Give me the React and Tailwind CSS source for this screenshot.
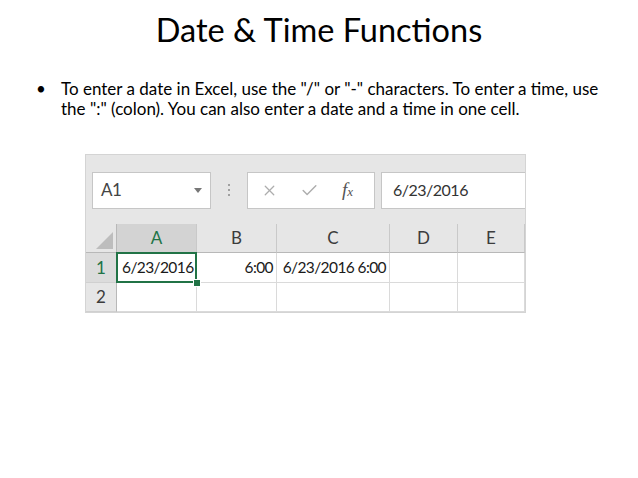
import { X, Check } from 'lucide-react';

const font = { fontFamily: 'Lato, "Open Sans", sans-serif' };

function HeaderCell({ label, active }) {
  return (
    <div
      className={`flex items-center justify-center border-r border-[#c9c9c9] border-b border-b-[#b8b8b8] text-[17px] ${
        active ? 'bg-[#d3d3d3] text-[#217346]' : 'bg-[#e6e6e6] text-[#3c3c3c]'
      }`}
    >
      {label}
    </div>
  );
}

function RowHead({ label, active }) {
  return (
    <div
      className={`flex items-center justify-center border-r border-[#b8b8b8] border-b border-b-[#d0d0d0] text-[17px] ${
        active ? 'bg-[#dcdcdc] text-[#217346]' : 'bg-[#e6e6e6] text-[#3c3c3c]'
      }`}
    >
      {label}
    </div>
  );
}

function Cell({ children, right, selected }) {
  return (
    <div
      className={`relative flex items-center border-r border-b border-[#dadada] bg-white text-[15.5px] tracking-[-0.6px] text-[#1a1a1a] whitespace-nowrap ${
        right ? 'justify-end pr-[3px]' : 'pl-[5px]'
      } ${selected ? 'z-10' : ''}`}
    >
      {children}
      {selected && (
        <>
          <div className="absolute -left-px -top-px right-[-1px] bottom-[-1px] border-2 border-[#217346]" />
          <div className="absolute right-[-5px] bottom-[-5px] w-[8px] h-[8px] bg-[#217346] border border-white" />
        </>
      )}
    </div>
  );
}

function Sheet() {
  return (
    <div className="ml-[85px] mt-[35px] w-[441px] h-[159px] bg-[#e6e6e6] border border-[#d4d4d4] flex flex-col" style={font}>
      <div className="flex items-center pt-[16px] pl-[6px] h-[54px]">
        <div className="w-[119px] h-[37px] bg-white border border-[#c6c6c6] flex items-center justify-between pl-[8px] pr-[8px] text-[17px] tracking-[-0.4px] text-[#444]">
          <span>A1</span>
          <span className="w-0 h-0 border-l-[4px] border-r-[4px] border-t-[5px] border-l-transparent border-r-transparent border-t-[#777]" />
        </div>
        <div className="w-[36px] flex flex-col items-center gap-[3px]">
          <span className="w-[2px] h-[2px] bg-[#a0a0a0]" />
          <span className="w-[2px] h-[2px] bg-[#a0a0a0]" />
          <span className="w-[2px] h-[2px] bg-[#a0a0a0]" />
        </div>
        <div className="w-[128px] h-[37px] bg-white border border-[#c6c6c6] flex items-center pl-[13px] text-[#adadad]">
          <X size={17} strokeWidth={1.8} />
          <Check size={19} strokeWidth={1.8} className="ml-[22px]" />
          <span className="ml-[23px] text-[19px] text-[#555] italic" style={{ fontFamily: '"Liberation Serif", serif' }}>
            f<span className="text-[13px]">x</span>
          </span>
        </div>
        <div className="ml-[6px] flex-1 h-[37px] bg-white border border-[#c6c6c6] border-r-0 flex items-center pl-[11px] text-[16px] tracking-[-0.5px] text-[#333]">
          6/23/2016
        </div>
      </div>
      <div className="mt-[15px] grid grid-cols-[31px_80px_80px_113px_68px_67px] grid-rows-[29px_30px_29px]">
        <div className="relative bg-[#e6e6e6] border-r border-b border-[#b8b8b8]">
          <svg className="absolute right-[3px] bottom-[3px]" width="17" height="17" viewBox="0 0 17 17">
            <polygon points="17,0 17,17 0,17" fill="#bdbdbd" />
          </svg>
        </div>
        <HeaderCell label="A" active />
        <HeaderCell label="B" />
        <HeaderCell label="C" />
        <HeaderCell label="D" />
        <HeaderCell label="E" />

        <RowHead label="1" active />
        <Cell selected>6/23/2016</Cell>
        <Cell right>6:00</Cell>
        <Cell right>6/23/2016 6:00</Cell>
        <Cell />
        <Cell />

        <RowHead label="2" />
        <Cell />
        <Cell />
        <Cell />
        <Cell />
        <Cell />
      </div>
    </div>
  );
}

export default function App() {
  return (
    <div className="w-[638px] h-[478px] bg-white overflow-hidden text-black" style={font}>
      <h1 className="pt-[10px] text-center text-[32.5px] leading-[40px]">Date &amp; Time Functions</h1>
      <ul className="mt-[29px] pl-[36px] text-[17px] leading-[20px]">
        <li className="flex">
          <span className="w-[25px]">•</span>
          <div>
            <div className="whitespace-nowrap">To enter a date in Excel, use the "/" or "-" characters. To enter a time, use</div>
            <div className="whitespace-nowrap">the ":" (colon). You can also enter a date and a time in one cell.</div>
          </div>
        </li>
      </ul>
      <Sheet />
    </div>
  );
}
